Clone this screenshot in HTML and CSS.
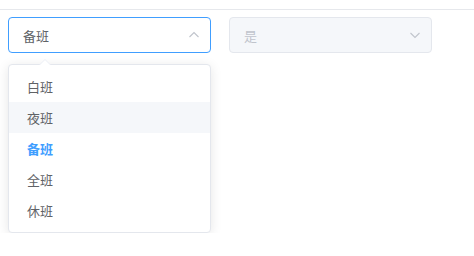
FILE: index.html
```html
<!DOCTYPE html>
<html lang="zh-CN">
<head>
    <meta charset="UTF-8">
    <title>班次选择</title>
    <link rel="stylesheet" href="styles.css">
</head>
<body>
    <div class="topbar"></div>

    <div class="form-row">
        <div class="select-wrap">
            <div class="select is-focus">
                <span class="select-value">备班</span>
                <svg class="select-arrow" width="12" height="12" viewBox="0 0 12 12">
                    <path d="M1.5 8 L6 3.5 L10.5 8" fill="none" stroke="#c0c4cc" stroke-width="1.1"/>
                </svg>
            </div>

            <div class="dropdown">
                <span class="dropdown-arrow"></span>
                <ul class="dropdown-list">
                    <li class="dropdown-item">白班</li>
                    <li class="dropdown-item hover">夜班</li>
                    <li class="dropdown-item selected">备班</li>
                    <li class="dropdown-item">全班</li>
                    <li class="dropdown-item">休班</li>
                </ul>
            </div>
        </div>

        <div class="select-wrap">
            <div class="select is-disabled">
                <span class="select-value">是</span>
                <svg class="select-arrow" width="12" height="12" viewBox="0 0 12 12">
                    <path d="M1.5 4 L6 8.5 L10.5 4" fill="none" stroke="#c0c4cc" stroke-width="1.1"/>
                </svg>
            </div>
        </div>
    </div>
</body>
</html>
```
FILE: styles.css
```css
html, body {
    min-height: 100%;
}

body {
    margin: 0;
    padding: 0;
    background: #fff;
    font-family: "Noto Sans CJK SC", "Noto Sans", sans-serif;
    font-size: 13px;
    color: #606266;
}

.topbar {
    height: 9px;
    border-bottom: 1px solid #e6e8ec;
}

.form-row {
    display: flex;
    align-items: flex-start;
    gap: 18px;
    padding: 7px 0 0 8px;
}

.select-wrap {
    display: flex;
    flex-direction: column;
    width: 203px;
}

.select {
    box-sizing: border-box;
    height: 36px;
    display: flex;
    align-items: center;
    justify-content: space-between;
    padding: 0 10px 0 14px;
    border: 1px solid #dcdfe6;
    border-radius: 4px;
    background: #fff;
}

.select.is-focus {
    border-color: #409eff;
}

.select.is-disabled {
    background: #f5f7fa;
    border-color: #e4e7ed;
    color: #c0c4cc;
}

.select-arrow {
    display: block;
}

/* dropdown panel, opened under the first select */
.dropdown {
    position: relative;
    margin-top: 11px;
    box-sizing: border-box;
    background: #fff;
    border: 1px solid #e4e7ed;
    border-radius: 4px;
    box-shadow: 0 2px 12px 0 rgba(0, 0, 0, 0.1);
}

.dropdown-arrow {
    position: absolute;
    top: -6px;
    left: 30px;
    width: 0;
    height: 0;
    border: 6px solid transparent;
    border-top-width: 0;
    border-bottom-color: #ebeef5;
}

.dropdown-arrow::after {
    content: "";
    position: absolute;
    top: 1px;
    left: -6px;
    border: 6px solid transparent;
    border-top-width: 0;
    border-bottom-color: #fff;
}

.dropdown-list {
    list-style: none;
    margin: 0;
    padding: 6px 0;
}

.dropdown-item {
    height: 31px;
    line-height: 31px;
    padding: 0 18px;
    color: #606266;
}

.dropdown-item.hover {
    background: #f5f7fa;
}

.dropdown-item.selected {
    color: #409eff;
    font-weight: bold;
}
```
